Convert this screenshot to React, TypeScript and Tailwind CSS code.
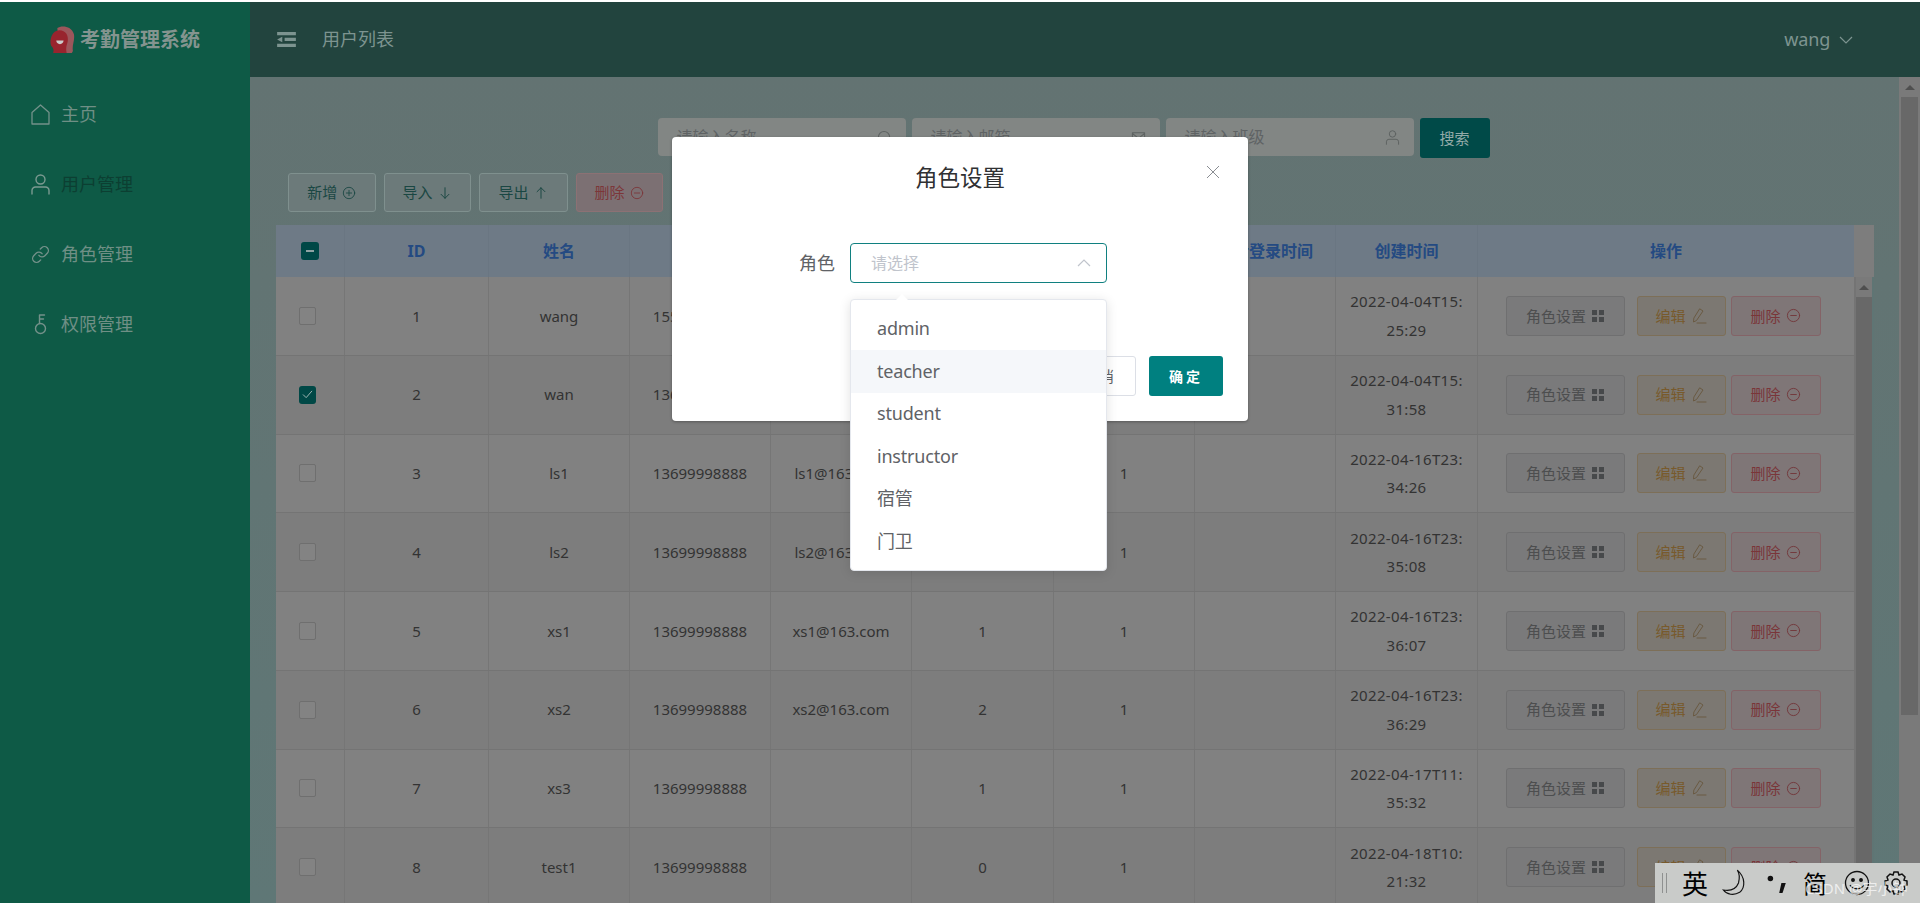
import React from "react";

const font = "font-['Noto_Sans','Noto_Sans_CJK_SC',sans-serif]";
const cols = "grid grid-cols-[69px_144px_141px_141px_141px_142px_141px_141px_142px_376px]";

type P = { className?: string };
const Svg = ({ className, children, vb = "0 0 24 24", sw = 1.5 }: P & { children: React.ReactNode; vb?: string; sw?: number }) => (
  <svg viewBox={vb} fill="none" stroke="currentColor" strokeWidth={sw} strokeLinecap="round" strokeLinejoin="round" className={className}>
    {children}
  </svg>
);
const Home = (p: P) => <Svg {...p} vb="0 0 19 21" sw={1.3}><path d="M1 20V8.500L9.500 1 18 8.500V20Z" /></Svg>;
const User = (p: P) => (
  <Svg {...p} vb="0 0 19 21" sw={1.4}>
    <circle cx="9.500" cy="5.500" r="4.500" />
    <path d="M1 20v-3.500A3.500 3.500 0 0 1 4.500 13h10a3.500 3.500 0 0 1 3.500 3.500V20" />
  </Svg>
);
const Link = (p: P) => (
  <Svg {...p} vb="0 0 24 24" sw={1.7}>
    <path d="M10 13a5 5 0 0 0 7.540.540l3-3a5 5 0 0 0-7.070-7.070l-1.720 1.710" />
    <path d="M14 11a5 5 0 0 0-7.540-.540l-3 3a5 5 0 0 0 7.070 7.070l1.710-1.710" />
  </Svg>
);
const Key = (p: P) => (
  <Svg {...p} vb="0 0 14 21" sw={1.4}>
    <circle cx="7" cy="14.500" r="5" />
    <path d="M6 9.500V1h5M6 5h4" />
  </Svg>
);
const Search = (p: P) => <Svg {...p} vb="0 0 16 16" sw={1.1}><circle cx="7.500" cy="7.500" r="6" /><path d="m12 12 2.500 2.500" /></Svg>;
const Mail = (p: P) => <Svg {...p} vb="0 0 16 16" sw={1.1}><path d="M1.500 3h13v10h-13zM1.500 3.500 8 9l6.500-5.500" /></Svg>;
const Plus = (p: P) => <Svg {...p} vb="0 0 16 16" sw={1}><circle cx="8" cy="8" r="6.500" /><path d="M5 8h6M8 5v6" /></Svg>;
const Minus = (p: P) => <Svg {...p} vb="0 0 16 16" sw={1}><circle cx="8" cy="8" r="6.500" /><path d="M5 8h6" /></Svg>;
const Down = (p: P) => <Svg {...p} vb="0 0 16 16" sw={1.1}><path d="M8 2v12M3.500 9.500 8 14l4.500-4.500" /></Svg>;
const Up = (p: P) => <Svg {...p} vb="0 0 16 16" sw={1.1}><path d="M8 14V2M3.500 6.500 8 2l4.500 4.500" /></Svg>;
const Pencil = (p: P) => <Svg {...p} vb="0 0 16 16" sw={1}><path d="m9 1 3 2-6.500 9.500L2.500 14l.3-3.500ZM6 15h9" /></Svg>;
const Grid = ({ className }: P) => (
  <span className={"grid grid-cols-2 gap-[2px] " + (className ?? "")}>
    <i className="size-[5px] bg-[#47494b]" />
    <i className="size-[5px] bg-[#47494b]" />
    <i className="size-[5px] bg-[#47494b]" />
    <i className="size-[5px] bg-[#47494b]" />
  </span>
);

const Sidebar = () => {
  const items = [
    { t: "主页", I: Home, c: "text-[#6f8f85]", ic: "w-[19px] h-[21px]" },
    { t: "用户管理", I: User, c: "text-[#0c3f32]", ic: "w-[19px] h-[21px] text-[#7b9a91]" },
    { t: "角色管理", I: Link, c: "text-[#6f8f85]", ic: "w-[19px] h-[21px]" },
    { t: "权限管理", I: Key, c: "text-[#6f8f85]", ic: "w-[19px] h-[21px]" },
  ];
  return (
    <aside className="w-[250px] shrink-0 bg-[#0e5a46] flex flex-col">
      <div className="h-[75px] flex items-center pl-[49px] gap-[5px]">
        <svg viewBox="0 0 25 26" className="w-[26px] h-[27px]">
          <path d="M8 2C12 -1 22 0 24 8c1 6-2 10-1 16l-1 2H10Z" fill="#9c565b" />
          <path d="M10 4c6 0 9 5 8 11-1 4-2 6-1 11H4c1-3 0-5-2-7-2-6 1-15 8-15Z" fill="#98242e" />
          <path d="M7 14h7c0 2-1.500 3.500-3.500 3.500S7 16 7 14Z" fill="#ccc" />
        </svg>
        <span className="text-[20px] font-bold text-[#84948f]">考勤管理系统</span>
      </div>
      <nav className="flex flex-col pt-[2px]">
        {items.map(({ t, I, c, ic }) => (
          <div key={t} className="h-[70px] flex items-center pl-[31px] gap-[11px] text-[#74918a]">
            <I className={ic} />
            <span className={"text-[18px] " + c}>{t}</span>
          </div>
        ))}
      </nav>
    </aside>
  );
};

const Header = () => (
  <header className="h-[75px] shrink-0 bg-[#22443e] flex items-center pl-[27px] pr-[67px] text-[#7d9490]">
    <svg viewBox="0 0 20 16" className="w-[19px] h-[15px]" fill="currentColor">
      <path d="M0 0h20v3.500H0zM8 6.200h12v3.500H8zM0 12.500h20V16H0zM5.500 5 0 8l5.500 3z" />
    </svg>
    <span className="ml-[26px] text-[18px]">用户列表</span>
    <span className="ml-auto text-[18px] tracking-[-0.2px]">wang</span>
    <svg viewBox="0 0 14 8" className="ml-[9px] w-[14px] h-[8px]" fill="none" stroke="currentColor" strokeWidth="1.200"><path d="m1 1 6 6 6-6" /></svg>
  </header>
);

const InputBox = ({ ph, Icon }: { ph: string; Icon: (p: P) => React.ReactElement }) => (
  <div className="w-[248px] h-[38px] rounded-[4px] bg-[#828684] flex items-center pl-[19px] pr-[14px] text-[16px] text-[#5f6364]">
    <span className="flex-1">{ph}</span>
    <Icon className="size-[15px] text-[#5e6362]" />
  </div>
);

const ToolBtn = ({ t, Icon, w, red }: { t: string; Icon: (p: P) => React.ReactElement; w: string; red?: boolean }) => (
  <div
    className={
      "h-[39px] rounded-[3px] border flex items-center justify-center gap-[5px] text-[15px] " +
      w +
      (red ? " bg-[#7c7073] border-[#8c7174] text-[#7c3639]" : " bg-[#6c7a7a] border-[#7f908e] text-[#1a4743]")
    }
  >
    {t}
    <Icon className="size-[14px]" />
  </div>
);

const rows = [
  ["1", "wang", "15511112222", "", "", "1"],
  ["2", "wan", "13699998888", "", "", "1"],
  ["3", "ls1", "13699998888", "ls1@163.com", "1", "1"],
  ["4", "ls2", "13699998888", "ls2@163.com", "1", "1"],
  ["5", "xs1", "13699998888", "xs1@163.com", "1", "1"],
  ["6", "xs2", "13699998888", "xs2@163.com", "2", "1"],
  ["7", "xs3", "13699998888", "", "1", "1"],
  ["8", "test1", "13699998888", "", "0", "1"],
];
const times = [
  ["2022-04-04T15:", "25:29"],
  ["2022-04-04T15:", "31:58"],
  ["2022-04-16T23:", "34:26"],
  ["2022-04-16T23:", "35:08"],
  ["2022-04-16T23:", "36:07"],
  ["2022-04-16T23:", "36:29"],
  ["2022-04-17T11:", "35:32"],
  ["2022-04-18T10:", "21:32"],
];
const heads = ["ID", "姓名", "手机号", "邮箱", "班级", "状态", "最后登录时间", "创建时间", "操作"];

const cell = "flex items-center justify-center border-r border-[#767676] last:border-r-0";

const Scroll = ({ className, thumbH }: { className: string; thumbH: string }) => (
  <div className={"shrink-0 bg-[#7a7a7a] flex flex-col items-stretch " + className}>
    <div className="h-[20px] flex items-center justify-center">
      <i className="w-0 h-0 border-x-[5px] border-x-transparent border-b-[5px] border-b-[#4f4f4f]" />
    </div>
    <div className={"bg-[#686868] " + thumbH} />
  </div>
);

const Table = () => (
  <div className="mt-[13px] ml-[26px] w-[1598px] flex-1 min-h-0 flex flex-col overflow-hidden">
    <div className="flex h-[52px] shrink-0 bg-[#6e7a86]">
      <div className={cols + " w-[1578px] text-[16px] font-bold text-[#244a82]"}>
        <div className="flex items-center pl-[25px] border-r border-[#6a7682]">
          <span className="size-[18px] rounded-[3px] bg-[#004846] flex items-center justify-center">
            <i className="w-[8px] h-[2px] bg-[#8fa3a3]" />
          </span>
        </div>
        {heads.map((h) => (
          <div key={h} className="flex items-center justify-center border-r border-[#6a7682] last:border-r-0">{h}</div>
        ))}
      </div>
      <div className="flex-1 bg-[#7d7d7d]" />
    </div>
    <div className="flex flex-1 min-h-0">
      <div className="w-[1578px] flex flex-col text-[15px] text-[#333333]">
        {rows.map((r, i) => (
          <div key={r[0]} className={cols + " h-[78.75px] shrink-0 border-b border-[#747474] " + (i % 2 ? "bg-[#7d7d7d]" : "bg-[#818181]")}>
            <div className={"pl-[23px] !justify-start " + cell}>
              {r[0] === "2" ? (
                <span className="w-[17px] h-[18px] rounded-[3px] bg-[#004846] flex items-center justify-center">
                  <svg viewBox="0 0 12 10" className="w-[11px] h-[9px]" fill="none" stroke="#9fb5b3" strokeWidth="1.100"><path d="m1 5 3.500 3.500L11 1" /></svg>
                </span>
              ) : (
                <span className="w-[17px] h-[18px] rounded-[2px] border border-[#6f6f6f] bg-[#838383]" />
              )}
            </div>
            {r.map((v, j) => (
              <div key={j} className={cell}>{v}</div>
            ))}
            <div className={cell} />
            <div className={"flex-col leading-[28.500px] tracking-[0.35px] " + cell}>
              <span>{times[i][0]}</span>
              <span>{times[i][1]}</span>
            </div>
            <div className={"pl-[27.500px] !justify-start gap-[5px] " + cell}>
              <div className="w-[119px] h-[40px] mr-[7px] rounded-[3px] border border-[#6f6f70] bg-[#7a7a7b] text-[#4d4e4f] flex items-center justify-center gap-[6px]">
                角色设置
                <Grid />
              </div>
              <div className="w-[89px] h-[40px] rounded-[3px] border border-[#7d6f58] bg-[#7c7872] text-[#785a2c] flex items-center justify-center gap-[5px]">
                编辑
                <Pencil className="size-[16px] text-[#6a5a42]" />
              </div>
              <div className="w-[90px] h-[40px] rounded-[3px] border border-[#846367] bg-[#7f7677] text-[#7a3539] flex items-center justify-center gap-[5px]">
                删除
                <Minus className="size-[15px] text-[#72373b]" />
              </div>
            </div>
          </div>
        ))}
      </div>
      <Scroll thumbH="flex-1" className="w-[20px] border-l-[2px] border-r-[2px] border-l-[#747474] border-r-[#5f7574]" />
    </div>
  </div>
);

const Modal = () => (
  <div className="absolute left-[672px] top-[137px] w-[576px] h-[284px] rounded-[4px] bg-white shadow-[0_1px_3px_rgba(0,0,0,0.3)] flex flex-col">
    <div className="h-[81px] flex items-center justify-center text-[22.500px] text-[#303133]">角色设置</div>
    <svg viewBox="0 0 14 14" className="absolute right-[28px] top-[28px] size-[14px]" fill="none" stroke="#8a8d92" strokeWidth="1"><path d="m1 1 12 12M13 1 1 13" /></svg>
    <div className="mt-[25px] flex items-center pl-[127px] gap-[15px]">
      <span className="text-[18px] text-[#606266]">角色</span>
      <div className="w-[257px] h-[40px] rounded-[4px] border border-[#108080] pl-[20px] pr-[15px] flex items-center justify-between text-[16px] text-[#c0c4cc]">
        请选择
        <svg viewBox="0 0 14 8" className="w-[14px] h-[8px]" fill="none" stroke="#c0c4cc" strokeWidth="1.200"><path d="m1 7 6-6 6 6" /></svg>
      </div>
    </div>
    <div className="mt-auto mb-[25px] pr-[25px] flex justify-end gap-[13px]">
      <div className="w-[74px] h-[40px] rounded-[3px] border border-[#dcdfe6] text-[#606266] text-[15px] tracking-[3px] flex items-center justify-center">取消</div>
      <div className="w-[74px] h-[40px] rounded-[3px] bg-[#008080] text-white text-[14px] font-bold tracking-[3px] flex items-center justify-center">确定</div>
    </div>
  </div>
);

const Dropdown = () => (
  <div className="absolute left-[850px] top-[298.500px] w-[257px] h-[272.500px] rounded-[4px] bg-white border border-[#e4e7ed] shadow-[0_2px_12px_rgba(0,0,0,0.12)] pt-[8px] text-[18px] tracking-[-0.2px] text-[#606266]">
    <i className="absolute left-[45px] -top-[6px] size-0 border-x-[6px] border-x-transparent border-b-[6px] border-b-white" />
    {["admin", "teacher", "student", "instructor", "宿管", "门卫"].map((t) => (
      <div key={t} className={"h-[42.500px] flex items-center pl-[26px] " + (t === "teacher" ? "bg-[#f5f7fa]" : "")}>{t}</div>
    ))}
  </div>
);

const ImeBar = () => (
  <div className="absolute right-0 bottom-0 w-[265px] h-[40px] bg-[#c9cbc9] flex items-center text-black">
    <span className="ml-[7px] w-[5px] h-[20px] border-x border-[#8f9190]" />
    <span className="ml-[15px] text-[26px] leading-none font-['Noto_Sans_CJK_SC',sans-serif]">英</span>
    <svg viewBox="0 0 24 24" className="ml-[13px] size-[28px]" fill="none" stroke="#111" strokeWidth="1">
      <path d="M14 1c7 6 7 15 2 19-5 3-11 2-14-2 6 1 11-1 13-6 1-4 1-8-1-11Z" />
    </svg>
    <svg viewBox="0 0 20 20" className="ml-[17px] size-[22px]" fill="#111"><circle cx="4" cy="6" r="2.500" /><path d="M14 10h4l-3 9h-3Z" /></svg>
    <span className="ml-[15px] text-[24px] leading-none font-['Noto_Sans_CJK_SC',sans-serif]">简</span>
    <svg viewBox="0 0 26 26" className="ml-[17px] size-[26px]" fill="none" stroke="#111" strokeWidth="1.300">
      <circle cx="13" cy="13" r="11.500" />
      <circle cx="9" cy="10" r="1.300" fill="#111" />
      <circle cx="17" cy="10" r="1.300" fill="#111" />
      <path d="M6 15c3 5 11 5 14 0" />
    </svg>
    <svg viewBox="0 0 24 24" className="ml-[14px] size-[24px]" fill="none" stroke="#111" strokeWidth="1.500">
      <circle cx="12" cy="12" r="4" />
      <path d="M10 1h4l1 3 3-1 3 3-1 3 3 1v4l-3 1 1 3-3 3-3-1-1 3h-4l-1-3-3 1-3-3 1-3-3-1v-4l3-1-1-3 3-3 3 1Z" />
    </svg>
    <span className="absolute left-[150px] top-[14px] text-[15px] text-white/70">CSDN @宇小钟</span>
  </div>
);

export default function App() {
  return (
    <div className={"w-[1920px] h-[903px] relative overflow-hidden bg-white flex flex-col pt-[2px] " + font}>
      <div className="flex-1 min-h-0 flex">
        <Sidebar />
        <main className="flex-1 min-w-0 flex flex-col">
          <Header />
          <div className="flex-1 min-h-0 flex">
            <div className="flex-1 min-w-0 bg-gradient-to-b from-[#637372] to-[#5f7776] flex flex-col overflow-hidden">
              <div className="mt-[41px] pr-[2px] flex justify-center gap-[6px]">
                <InputBox ph="请输入名称" Icon={Search} />
                <InputBox ph="请输入邮箱" Icon={Mail} />
                <InputBox ph="请输入班级" Icon={User} />
                <div className="w-[70px] h-[40px] rounded-[3px] bg-[#004a48] text-[#93aaa8] text-[15px] flex items-center justify-center">搜索</div>
              </div>
              <div className="mt-[15px] ml-[38px] flex gap-[8px]">
                <ToolBtn t="新增" Icon={Plus} w="w-[87.500px]" />
                <ToolBtn t="导入" Icon={Down} w="w-[87px]" />
                <ToolBtn t="导出" Icon={Up} w="w-[89px]" />
                <ToolBtn t="删除" Icon={Minus} w="w-[87px]" red />
              </div>
              <Table />
            </div>
            <Scroll thumbH="h-[618px]" className="w-[21px] pl-[2px] pr-[2px]" />
          </div>
        </main>
      </div>
      <Modal />
      <Dropdown />
      <ImeBar />
    </div>
  );
}
